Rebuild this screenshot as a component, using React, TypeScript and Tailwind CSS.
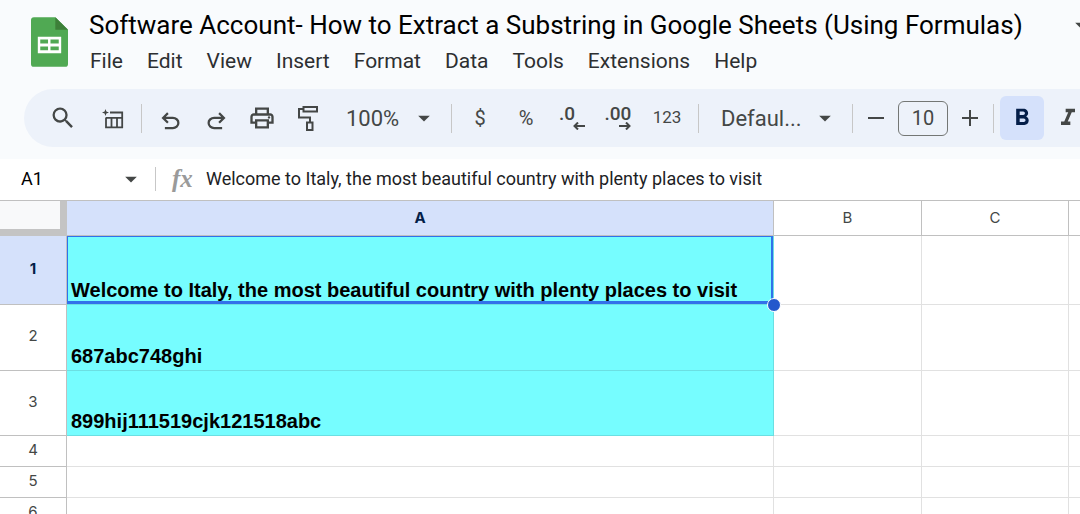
import type { ReactNode } from 'react';
import { MdArrowDropDown, MdFormatBold, MdFormatItalic, MdOutlinePrint, MdSearch } from 'react-icons/md';
import clsx from 'clsx';

const menus = ['File', 'Edit', 'View', 'Insert', 'Format', 'Data', 'Tools', 'Extensions', 'Help'];

const columns = ['A', 'B', 'C', 'D'];

const rows = [
  { height: 'h-[69px]', value: 'Welcome to Italy, the most beautiful country with plenty places to visit' },
  { height: 'h-[66px]', value: '687abc748ghi' },
  { height: 'h-[65px]', value: '899hij111519cjk121518abc' },
  { height: 'h-[31px]', value: '' },
  { height: 'h-[31px]', value: '' },
  { height: 'h-[31px]', value: '' },
];

function SheetsLogo() {
  return (
    <svg width="37" height="50" viewBox="0 0 38 51" aria-hidden="true">
      <path d="M3 0h22l13 13v35a3 3 0 0 1-3 3H3a3 3 0 0 1-3-3V3a3 3 0 0 1 3-3z" fill="#50a953" />
      <path d="M25 0l13 13H25z" fill="#3d8039" />
      <path d="M7 20h24v17H7zM9.500 23v4h8v-4zM20 23v4h8.500v-4zM9.500 30v4h8v-4zM20 30v4h8.500v-4z" fill="#fff" fillRule="evenodd" />
    </svg>
  );
}

function InsertTableIcon() {
  return (
    <svg width="24" height="24" viewBox="0 0 24 24" fill="none" stroke="currentColor" strokeWidth="1.800" aria-hidden="true">
      <path d="M9 6.500h12.200v14.800H5V11.500M5 11.800h16M10.500 11.800v9.500M16 11.800v9.500" />
      <path d="M4.500 3l.9 2.600 2.600.9-2.600.9-.9 2.600-.9-2.600L1 6.500l2.600-.9z" fill="currentColor" stroke="none" />
    </svg>
  );
}

function UndoIcon({ flip = false }: { flip?: boolean }) {
  return (
    <svg width="27" height="27" viewBox="0 -1060 960 960" fill="currentColor" className={clsx(flip && '-scale-x-100')} aria-hidden="true">
      <path
        d="M280-200v-80h284q63 0 109.500-40T720-420q0-60-46.500-100T564-560H312l104 104-56 56-200-200 200-200 56 56-104 104h252q97 0 169.500 63T800-420q0 94-72.500 157T564-200H280Z"
      />
    </svg>
  );
}

function PaintFormatIcon() {
  return (
    <svg width="22" height="26" viewBox="0 0 22 26" fill="none" stroke="currentColor" strokeWidth="2" aria-hidden="true">
      <path d="M6.500 2h13.500v4.500h-13.500zM6.500 4H2v8.500h11V17M10 17.500h5.500V25H10z" />
    </svg>
  );
}

function DecimalArrow({ flip = false }: { flip?: boolean }) {
  return (
    <svg width="12" height="8" viewBox="0 0 12 8" fill="none" stroke="currentColor" strokeWidth="2" className={clsx(flip && '-scale-x-100')} aria-hidden="true">
      <path d="M12 4H1.500M5 .5L1.500 4 5 7.500" />
    </svg>
  );
}

function ToolButton({ label, children, className }: { label: string; children: ReactNode; className?: string }) {
  return (
    <button
      type="button"
      aria-label={label}
      className={clsx('flex h-11 shrink-0 items-center justify-center rounded-md', className ?? 'w-11')}
    >
      {children}
    </button>
  );
}

function ToolSelect({ label, value, className }: { label: string; value: string; className: string }) {
  return (
    <div className={clsx('relative flex shrink-0 items-center', className)}>
      <select aria-label={label} className="h-11 w-full appearance-none bg-transparent text-[22px]">
        <option>{value}</option>
      </select>
      <MdArrowDropDown size={28} className="pointer-events-none absolute right-[7px]" />
    </div>
  );
}

function Divider() {
  return <div className="mx-[6px] h-[29px] w-px shrink-0 bg-[#c7c7c7]" />;
}

function Header() {
  return (
    <header className="flex h-[89px] shrink-0 pt-[9px] pl-[31px]">
      <div className="pt-2">
        <SheetsLogo />
      </div>
      <div className="min-w-0 flex-1 pl-[21px]">
        <div className="flex items-center whitespace-nowrap text-black">
          <h1 className="text-[26px] leading-8">
            Software Account- How to Extract a Substring in Google Sheets (Using Formulas)
          </h1>
          <button type="button" aria-label="Document status" className="ml-11 shrink-0 text-[#444746]">
            <MdArrowDropDown size={28} />
          </button>
        </div>
        <nav className="mt-1 flex gap-6 pl-px text-[21px] leading-8 text-[#2d2f31]">
          {menus.map((menu) => (
            <button key={menu} type="button">
              {menu}
            </button>
          ))}
        </nav>
      </div>
    </header>
  );
}

function Toolbar() {
  return (
    <div className="ml-6 flex h-[58px] shrink-0 items-center overflow-hidden rounded-l-full bg-[#edf2fa] pl-[17px] text-[#444746]">
      <div className="flex gap-[6px]">
        <ToolButton label="Search the menus"><MdSearch size={28} /></ToolButton>
        <ToolButton label="Insert table"><InsertTableIcon /></ToolButton>
      </div>
      <Divider />
      <div className="flex gap-[2px]">
        <ToolButton label="Undo"><UndoIcon /></ToolButton>
        <ToolButton label="Redo"><UndoIcon flip /></ToolButton>
        <ToolButton label="Print"><MdOutlinePrint size={28} /></ToolButton>
        <ToolButton label="Paint format"><PaintFormatIcon /></ToolButton>
      </div>
      <ToolSelect label="Zoom" value="100%" className="w-[115px] pl-4" />
      <Divider />
      <div className="flex gap-[2px] text-[20px]">
        <ToolButton label="Format as currency">$</ToolButton>
        <ToolButton label="Format as percent">%</ToolButton>
        <ToolButton label="Decrease decimal places">
          <span className="flex flex-col items-end text-[19px] leading-4 font-medium">
            <span className="pr-[10px]">.0</span>
            <DecimalArrow />
          </span>
        </ToolButton>
        <ToolButton label="Increase decimal places">
          <span className="flex flex-col items-end text-[19px] leading-4 font-medium">
            .00
            <DecimalArrow flip />
          </span>
        </ToolButton>
        <ToolButton label="More formats" className="w-[50px] text-[17px]">123</ToolButton>
      </div>
      <Divider />
      <ToolSelect label="Font" value="Defaul..." className="w-[141px] pl-4" />
      <Divider />
      <div className="flex items-center gap-[5px]">
        <ToolButton label="Decrease font size" className="w-[34px]">
          <span className="h-[2px] w-4 bg-current" />
        </ToolButton>
        <input
          aria-label="Font size"
          defaultValue="10"
          className="h-[35px] w-[50px] rounded-md border border-[#747775] bg-transparent text-center text-[20px]"
        />
        <ToolButton label="Increase font size" className="w-[34px]">
          <svg width="16" height="16" viewBox="0 0 16 16" stroke="currentColor" strokeWidth="2" aria-hidden="true">
            <path d="M8 0v16M0 8h16" />
          </svg>
        </ToolButton>
      </div>
      <Divider />
      <div className="flex gap-[2px]">
        <ToolButton label="Bold" className="w-11 bg-[#d5e1fb] text-[#041e49]"><MdFormatBold size={28} /></ToolButton>
        <ToolButton label="Italic"><MdFormatItalic size={28} /></ToolButton>
      </div>
    </div>
  );
}

function FormulaBar() {
  return (
    <div className="mt-3 flex h-[41px] shrink-0 items-center bg-white pb-[2px]">
      <input aria-label="Name box" defaultValue="A1" className="w-[117px] pl-[21px] text-[18px] text-black" />
      <button type="button" aria-label="Named ranges" className="text-[#444746]">
        <MdArrowDropDown size={28} />
      </button>
      <div className="ml-[10px] h-6 w-px bg-[#c7c7c7]" />
      <span className="w-[50px] pl-4 font-['Liberation_Serif',serif] text-[25px] leading-6 font-bold text-[#9a9a9a] italic" aria-hidden="true">
        fx
      </span>
      <input
        aria-label="Formula"
        defaultValue="Welcome to Italy, the most beautiful country with plenty places to visit"
        className="min-w-0 flex-1 text-[18px] text-[#202124]"
      />
    </div>
  );
}

function Grid() {
  return (
    <div className="flex-1 overflow-hidden border-t border-[#c0c0c0] bg-white">
      <table className="w-full table-fixed border-separate border-spacing-0 font-['Liberation_Sans',sans-serif]">
        <colgroup>
          <col className="w-[67px]" />
          <col className="w-[707px]" />
          <col className="w-[148px]" />
          <col className="w-[147px]" />
          <col />
        </colgroup>
        <thead>
          <tr className="h-[35px] font-['Inter',sans-serif] text-[15px] text-[#444746]">
            <th aria-label="Select all" className="border-r-[7px] border-b-[7px] border-[#c4c4c4] bg-[#f8f9fa]" />
            {columns.map((column) => (
              <th
                key={column}
                scope="col"
                className={clsx(
                  'overflow-hidden border-b border-[#c0c0c0] p-0',
                  column !== 'D' && 'border-r',
                  column === 'A' ? 'bg-[#d5e1fb] font-bold text-[#041e49]' : 'font-normal',
                )}
              >
                {column !== 'D' && column}
              </th>
            ))}
          </tr>
        </thead>
        <tbody>
          {rows.map((row, i) => (
            <tr key={i} className={row.height}>
              <th
                scope="row"
                className={clsx(
                  "border-r border-b border-[#c0c0c0] p-0 pb-[2px] font-['Inter',sans-serif] text-[15px]",
                  i === 0 ? 'bg-[#d5e1fb] font-bold text-[#041e49]' : 'font-normal text-[#444746]',
                )}
              >
                {i + 1}
              </th>
              <td
                className={clsx(
                  'relative border-r border-b px-1 py-0 align-bottom text-[20px] leading-7 font-bold whitespace-nowrap text-black',
                  row.value ? 'border-[#6bdfe2] bg-[#76fdff]' : 'border-[#e1e1e1]',
                )}
              >
                {row.value}
                {i === 0 && (
                  <>
                    <span className="absolute inset-0 border-t border-r-2 border-b-[3px] border-l border-[#3271ea]" />
                    <span className="absolute -right-2 -bottom-2 z-10 size-[14px] rounded-full border border-white bg-[#2458cc]" />
                  </>
                )}
              </td>
              <td className="border-r border-b border-[#e1e1e1]" />
              <td className="border-r border-b border-[#e1e1e1]" />
              <td className="border-b border-[#e1e1e1]" />
            </tr>
          ))}
        </tbody>
      </table>
    </div>
  );
}

export default function App() {
  return (
    <div className="flex h-screen flex-col overflow-hidden bg-[#f9fbfd] font-['Roboto',sans-serif]">
      <Header />
      <Toolbar />
      <FormulaBar />
      <Grid />
    </div>
  );
}
